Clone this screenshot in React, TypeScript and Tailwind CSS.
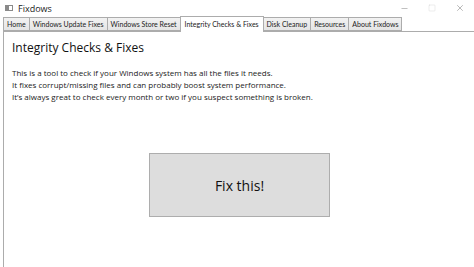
import { Minus, Square, X } from 'lucide-react'

const tabs = [
  'Home',
  'Windows Update Fixes',
  'Windows Store Reset',
  'Integrity Checks & Fixes',
  'Disk Cleanup',
  'Resources',
  'About Fixdows',
]

const ACTIVE = 'Integrity Checks & Fixes'

export default function App() {
  return (
    <div
      className="w-[474px] h-[267px] bg-white flex flex-col overflow-hidden text-[#1a1a1a]"
      style={{ fontFamily: '"Open Sans", "Noto Sans", "Liberation Sans", sans-serif' }}
    >
      {/* Title bar */}
      <div className="h-[16px] flex items-center shrink-0">
        <div className="ml-[5px] w-[8px] h-[6px] border border-[#8a8a8a] bg-white flex">
          <div className="w-[3px] h-full bg-[#8a8a8a]" />
        </div>
        <span className="ml-[5px] text-[9px] leading-none text-[#222]">Fixdows</span>
        <div className="ml-auto flex items-center text-[#555]">
          <div className="w-[28px] flex justify-center"><Minus size={9} strokeWidth={1} /></div>
          <div className="w-[28px] flex justify-center text-[#c8c8c8]"><Square size={8} strokeWidth={1} /></div>
          <div className="w-[28px] flex justify-center"><X size={10} strokeWidth={1} /></div>
        </div>
      </div>

      {/* Tabs */}
      <div
        className="flex items-end pl-[3px] h-[15px] shrink-0"
        style={{ fontFamily: 'Lato, "Open Sans", sans-serif' }}
      >
        {tabs.map(t =>
          t === ACTIVE ? (
            <div
              key={t}
              className="h-[16px] -mb-px px-[4px] bg-white border border-b-0 border-[#acacac] text-[7px] leading-[14px] relative z-10 -ml-px"
            >
              {t}
            </div>
          ) : (
            <div
              key={t}
              className="h-[14px] px-[3px] bg-gradient-to-b from-[#f2f2f2] to-[#e5e5e5] border border-[#acacac] border-l-0 first:border-l text-[7px] leading-[12px] text-[#222]"
            >
              {t}
            </div>
          )
        )}
      </div>

      {/* Content */}
      <div className="flex-1 ml-[3px] border-t border-l border-[#acacac] flex flex-col">
        <h1 className="ml-[8px] mt-[8px] text-[12px] leading-[16px] text-[#111]">Integrity Checks &amp; Fixes</h1>
        <div className="ml-[8px] mt-[11px] text-[8px] leading-[12px] text-[#222]">
          <p>This is a tool to check if your Windows system has all the files it needs.</p>
          <p>It fixes corrupt/missing files and can probably boost system performance.</p>
          <p>It’s always great to check every month or two if you suspect something is broken.</p>
        </div>
        <div className="mt-[50px] ml-[145px]">
          <button className="w-[181px] h-[64px] bg-[#dddddd] border border-[#adadad] text-[14px] text-[#111]">
            Fix this!
          </button>
        </div>
      </div>
    </div>
  )
}
